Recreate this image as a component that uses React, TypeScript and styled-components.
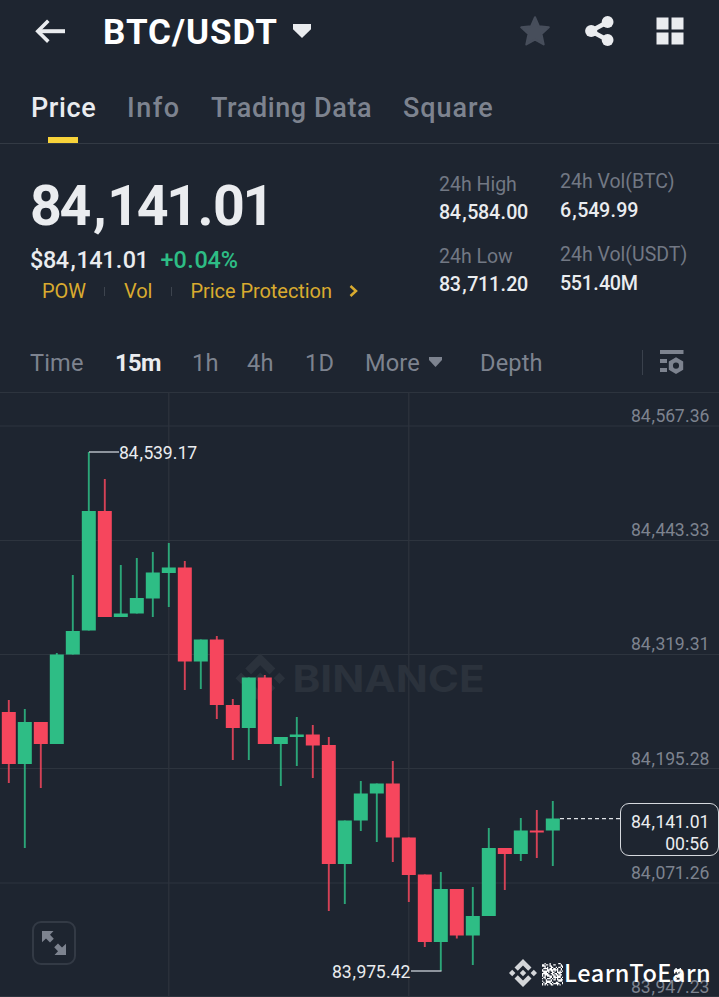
import React from "react";
import styled, { createGlobalStyle } from "styled-components";

const c = {
  bg: "#1e2530",
  line: "#2d343e",
  text: "#eaecef",
  muted: "#7d838f",
  up: "#2ebd85",
  down: "#f6465d",
  gold: "#d9ab2f",
};

const GlobalStyle = createGlobalStyle`
  * { box-sizing: border-box; }
  html, body { margin: 0; background: ${c.bg}; }
  body { font-family: Roboto, "Liberation Sans", sans-serif; color: ${c.text}; overflow: hidden; }
`;

const Screen = styled.main`
  width: 719px;
  height: 997px;
  display: flex;
  flex-direction: column;
  background: ${c.bg};
  overflow: hidden;
`;

/* ---------- figures ---------- */

const FigureText = styled.span<{ $tracking: number }>`
  letter-spacing: ${(p) => p.$tracking}em;
  white-space: nowrap;
`;

const Mark = styled.span<{ $comma: boolean }>`
  padding-left: ${(p) => (p.$comma ? "0.07em" : "0.03em")};
  padding-right: ${(p) => (p.$comma ? "0.05em" : "0.03em")};
`;

function Figure({ value, tracking = -0.016 }: { value: string; tracking?: number }) {
  return (
    <FigureText $tracking={tracking}>
      {value.split(/([,.])/).map((part, i) =>
        part === "," || part === "." ? (
          <Mark key={i} $comma={part === ","}>
            {part}
          </Mark>
        ) : (
          part
        ),
      )}
    </FigureText>
  );
}

/* ---------- header ---------- */

const Header = styled.header`
  height: 64px;
  flex: none;
  display: flex;
  align-items: center;
  padding: 0 35px 2px 34px;
`;

const Pair = styled.h1`
  margin: 4px 0 0 38px;
  font-size: 35px;
  line-height: 40px;
  font-weight: 700;
  letter-spacing: 1px;
  color: #fff;
`;

const HeaderCaret = styled.svg`
  margin: 0 0 0 15px;
`;

const Actions = styled.div`
  margin-left: auto;
  display: flex;
  align-items: center;
`;

const ShareIcon = styled.svg`
  margin: 0 42px 0 35px;
`;

/* ---------- tabs ---------- */

const Tabs = styled.nav`
  height: 80px;
  flex: none;
  display: grid;
  grid-template-columns: 96px 84px 192px auto;
  justify-items: start;
  padding-left: 31px;
  border-bottom: 1px solid #333a44;
`;

const Tab = styled.a<{ $active?: boolean; $tracking?: number }>`
  height: 79px;
  display: flex;
  flex-direction: column;
  align-items: center;
  justify-content: space-between;
  padding-top: 26px;
  font-size: 27px;
  line-height: 36px;
  font-weight: 500;
  letter-spacing: ${(p) => p.$tracking ?? 0.6}px;
  white-space: nowrap;
  color: ${(p) => (p.$active ? c.text : c.muted)};
`;

const TabBar = styled.span`
  width: 30px;
  height: 6px;
  margin-right: 1px;
  background: #f8d33a;
`;

/* ---------- summary ---------- */

const Summary = styled.section`
  height: 190px;
  flex: none;
  display: grid;
  grid-template-columns: 409px 121px 1fr;
  padding-left: 30px;
`;

const PriceColumn = styled.div`
  padding-top: 31px;
`;

const LastPrice = styled.div`
  font-size: 55.5px;
  line-height: 64px;
  font-weight: 700;
`;

const FiatRow = styled.div`
  display: flex;
  gap: 12px;
  margin-top: 7px;
  font-size: 23.4px;
  line-height: 28px;
  font-weight: 500;
`;

const Change = styled.span`
  color: ${c.up};
`;

const Tags = styled.div`
  display: flex;
  align-items: center;
  padding-left: 12px;
  margin-top: 3px;
  font-size: 20px;
  line-height: 28px;
  letter-spacing: -0.05px;
  color: ${c.gold};
`;

const TagDivider = styled.span`
  width: 1px;
  height: 9px;
  margin: 0 18.5px;
  background: #3d444e;
`;

const TagArrow = styled.svg`
  margin-left: 17px;
`;

const StatColumn = styled.dl<{ $top: number; $gap: number }>`
  margin: 0;
  padding-top: ${(p) => p.$top}px;

  dd {
    padding-top: ${(p) => p.$gap}px;
    margin-bottom: ${(p) => 16 - p.$gap + (p.$gap ? 1 : 0)}px;
  }
`;

const StatLabel = styled.dt`
  font-size: 19.5px;
  line-height: 28px;
  color: #727884;
  white-space: nowrap;
`;

const StatValue = styled.dd`
  margin: 0;
  font-size: 19.7px;
  line-height: 28px;
  font-weight: 500;
`;

/* ---------- interval bar ---------- */

const Intervals = styled.nav`
  height: 58px;
  flex: none;
  display: grid;
  grid-template-columns: 85px 77px 55px 58px 60px 115px 162px 1fr;
  align-items: center;
  padding-left: 30px;
  font-size: 23.6px;
  line-height: 28px;
  color: ${c.muted};
`;

const Interval = styled.a<{ $active?: boolean }>`
  display: flex;
  align-items: center;
  gap: 9px;
  letter-spacing: ${(p) => (p.$active ? -0.5 : 0.15)}px;
  font-weight: ${(p) => (p.$active ? 700 : 400)};
  color: ${(p) => (p.$active ? c.text : c.muted)};
`;

const MoreCaret = styled.svg`
  margin-top: -3px;
`;

const Tools = styled.div`
  display: flex;
  align-items: center;
  gap: 17px;
  margin-top: -2px;
`;

const ToolDivider = styled.span`
  width: 1px;
  height: 25px;
  background: #3a414c;
`;

/* ---------- chart ---------- */

const Chart = styled.section`
  position: relative;
  height: 605px;
  flex: none;
  overflow: hidden;
`;

const Plot = styled.svg`
  display: block;
`;

const ChartLabel = styled.div<{ $y: number; $x?: number; $right?: number; $muted?: boolean }>`
  position: absolute;
  top: ${(p) => p.$y - 402}px;
  ${(p) => (p.$x !== undefined ? `left: ${p.$x}px;` : `right: ${p.$right}px;`)}
  font-size: 17.6px;
  line-height: 20px;
  color: ${(p) => (p.$muted ? c.muted : c.text)};
`;

const PriceBox = styled.div`
  position: absolute;
  left: 620px;
  top: 411px;
  width: 99px;
  height: 53px;
  padding: 7px 9px 0 0;
  border: 1px solid #d5d8dd;
  border-radius: 9px;
  background: ${c.bg};
  font-size: 17.6px;
  line-height: 22px;
  text-align: right;
`;

const ExpandButton = styled.button`
  position: absolute;
  left: 32px;
  top: 529px;
  width: 44px;
  height: 44px;
  display: grid;
  place-items: center;
  padding: 0;
  border: 2px solid #333a45;
  border-radius: 9px;
  background: transparent;
`;

const Signature = styled.div`
  position: absolute;
  left: 509px;
  top: 565px;
  height: 32px;
  display: flex;
  align-items: center;
  font: 500 23.5px/32px "Noto Sans CJK SC", "Noto Sans", sans-serif;
  letter-spacing: 0.5px;
  color: #fff;
`;

const SignatureName = styled.span`
  margin-top: -2px;
`;

const Speckle = styled.svg`
  flex: none;
  margin: 2px 1px 0 5px;
`;

const LetterWithSpeckle = styled.span`
  position: relative;
`;

const LetterSpeckle = styled.svg`
  position: absolute;
  left: 2px;
  top: 13px;
`;

// Each candle: direction, high, body top, body bottom, low
type Candle = [boolean, number, number, number, number];
const candles: Candle[] = [
  [false, 700, 712, 764, 783],
  [true, 709, 722, 764, 848],
  [false, 722, 722, 744, 788],
  [true, 653, 654.5, 744, 744],
  [true, 575, 631, 654.5, 654.5],
  [true, 452, 511, 630.5, 630.5],
  [false, 479, 511, 617, 617],
  [true, 565, 613.5, 617, 617],
  [true, 558, 598, 613.5, 613.5],
  [true, 552, 572.5, 598.5, 617],
  [true, 543, 567.5, 573, 607],
  [false, 561, 567.5, 661.5, 690],
  [true, 639.5, 639.5, 661.5, 689],
  [false, 636, 639.5, 705, 719],
  [false, 699, 705, 728, 760],
  [true, 677.5, 677.5, 728, 760],
  [false, 675, 677.5, 744, 744],
  [true, 737, 737, 744, 786],
  [true, 717, 734.5, 737, 766],
  [false, 725, 734.5, 745.5, 778],
  [false, 737, 745, 864, 911],
  [true, 820.5, 820.5, 864, 904],
  [true, 781, 793.5, 820.5, 831],
  [true, 783.5, 783.5, 793.5, 842],
  [false, 761, 783.5, 837.5, 862],
  [false, 837.5, 837.5, 875, 902],
  [false, 874.5, 874.5, 942, 947],
  [true, 872, 889, 942, 971],
  [false, 889, 889, 935.5, 938.5],
  [true, 887, 916, 935.5, 965],
  [true, 828, 848, 916, 916],
  [false, 848, 848, 854, 890],
  [true, 818, 830.5, 854, 861],
  [false, 810, 830.5, 832.5, 858],
  [true, 801, 818.5, 830.5, 866],
];

const axis: [string, number][] = [
  ["84,567.36", 416],
  ["84,443.33", 530],
  ["84,319.31", 644],
  ["84,195.28", 759],
  ["84,071.26", 873],
  ["83,947.23", 987],
];

const gridRows = [392.3, 426, 540.5, 654.5, 768.5, 883, 996.5];
const gridColumns = [168.8, 408.8];

const diamond = (x: number, y: number, r: number) =>
  `M${x} ${y - r}L${x + r} ${y}L${x} ${y + r}L${x - r} ${y}Z`;

// Five-part diamond emblem on a 28-unit square
const emblem = [
  "M14 0L22.5 8.5L19.2 11.8L14 6.6L8.8 11.8L5.5 8.5Z",
  "M14 28L22.5 19.5L19.2 16.2L14 21.4L8.8 16.2L5.5 19.5Z",
  diamond(14, 14, 3.2),
  diamond(3.2, 14, 3.2),
  diamond(24.8, 14, 3.2),
].join("");

// Pseudo-random pixel pattern
function speckle(cols: number, rows: number, size: number, seed: number) {
  let s = seed;
  let d = "";
  for (let y = 0; y < rows; y++) {
    for (let x = 0; x < cols; x++) {
      s = (s * 1103515245 + 12345) % 2147483648;
      if ((s >> 12) % 100 < 58) d += `M${x * size} ${y * size}h${size}v${size}h-${size}z`;
    }
  }
  return d;
}

function Candles() {
  return (
    <>
      {candles.map(([up, high, top, bottom, low], i) => {
        const x = 8.8 + i * 16;
        return (
          <g key={i} fill={up ? c.up : c.down}>
            <rect x={x - 0.95} y={high} width={1.9} height={low - high} opacity={0.85} />
            <rect x={x - 7} y={top} width={14} height={bottom - top} />
          </g>
        );
      })}
    </>
  );
}

export default function App() {
  return (
    <Screen>
      <GlobalStyle />
      <Header>
        <svg width="31" height="26" viewBox="0 0 31 26" fill="none" stroke={c.text}>
          <path d="M31 13.2H4" strokeWidth="4" />
          <path d="M14.3 2.8L3.8 13.2L14.3 23.6" strokeWidth="3.6" />
        </svg>
        <Pair>BTC/USDT</Pair>
        <HeaderCaret width="18" height="14" viewBox="0 0 18 14">
          <path d="M0 0H18V5.3L9 14L0 5.3Z" fill={c.text} />
        </HeaderCaret>
        <Actions>
          <svg width="30" height="30" viewBox="0 0 30 30">
            <path
              d="M15 1.2L19 10.3L28.8 11.3L21.5 17.9L23.7 28.5L15 23.6L6.3 28.5L8.5 17.9L1.2 11.3L11 10.3Z"
              fill="#474e5b"
              stroke="#474e5b"
              strokeWidth="2"
              strokeLinejoin="round"
            />
          </svg>
          <ShareIcon width="29" height="30" viewBox="0 0 29 30" fill={c.text}>
            <path d="M6 15L22.5 6M6 15L22.5 24" stroke={c.text} strokeWidth="4.4" />
            <circle cx="6.2" cy="15" r="6.1" />
            <circle cx="22.6" cy="6" r="5.9" />
            <circle cx="22.6" cy="24" r="5.9" />
          </ShareIcon>
          <svg width="28" height="28" viewBox="0 0 28 28" fill={c.text}>
            <path d="M0.5 0.5h12v12h-12zM15.5 0.5h12v12h-12zM0.5 15.5h12v12h-12zM15.5 15.5h12v12h-12z" />
          </svg>
        </Actions>
      </Header>

      <Tabs>
        <Tab $active>
          Price
          <TabBar />
        </Tab>
        <Tab $tracking={1.5}>Info</Tab>
        <Tab>Trading Data</Tab>
        <Tab $tracking={0.95}>Square</Tab>
      </Tabs>

      <Summary>
        <PriceColumn>
          <LastPrice>
            <Figure value="84,141.01" tracking={-0.041} />
          </LastPrice>
          <FiatRow>
            <Figure value="$84,141.01" />
            <Change>
              <Figure value="+0.04%" tracking={-0.004} />
            </Change>
          </FiatRow>
          <Tags>
            POW
            <TagDivider />
            Vol
            <TagDivider />
            Price Protection
            <TagArrow width="9" height="12" viewBox="0 0 9 12" fill="none">
              <path d="M1.5 1L7 6L1.5 11" stroke={c.gold} strokeWidth="2.5" />
            </TagArrow>
          </Tags>
        </PriceColumn>
        <StatColumn $top={27} $gap={0}>
          <StatLabel>24h High</StatLabel>
          <StatValue>
            <Figure value="84,584.00" />
          </StatValue>
          <StatLabel>24h Low</StatLabel>
          <StatValue>
            <Figure value="83,711.20" />
          </StatValue>
        </StatColumn>
        <StatColumn $top={24} $gap={1}>
          <StatLabel>24h Vol(BTC)</StatLabel>
          <StatValue>
            <Figure value="6,549.99" />
          </StatValue>
          <StatLabel>24h Vol(USDT)</StatLabel>
          <StatValue>
            <Figure value="551.40M" />
          </StatValue>
        </StatColumn>
      </Summary>

      <Intervals>
        <Interval>Time</Interval>
        <Interval $active>15m</Interval>
        <Interval>1h</Interval>
        <Interval>4h</Interval>
        <Interval>1D</Interval>
        <Interval>
          More
          <MoreCaret width="13" height="10" viewBox="0 0 13 10">
            <path d="M0 0H13V3L6.5 10L0 3Z" fill={c.muted} />
          </MoreCaret>
        </Interval>
        <Interval>Depth</Interval>
        <Tools>
          <ToolDivider />
          <svg width="24" height="24" viewBox="0 0 24 24" fill={c.muted}>
            <path d="M0 0h23.5v4H0zM0 9h7v4H0zM0 18h7v4H0z" />
            <path
              fillRule="evenodd"
              d="M16 7.3L23.2 11.5V19.8L16 24L8.8 19.8V11.5ZM16 12.6A3 3 0 1 0 16 18.7A3 3 0 1 0 16 12.6Z"
            />
          </svg>
        </Tools>
      </Intervals>

      <Chart>
        <Plot width="719" height="605" viewBox="0 392 719 605">
          <g stroke={c.line} strokeWidth="1.2">
            {gridRows.map((y) => (
              <line key={y} x1="0" x2="719" y1={y} y2={y} />
            ))}
            {gridColumns.map((x) => (
              <line key={x} x1={x} x2={x} y1="392" y2="997" />
            ))}
          </g>
          <g fill="#2b323c">
            <path d={emblem} transform="translate(235.5 653.5) scale(1.77)" />
            <text
              x="292.5"
              y="692"
              fontFamily="Inter, sans-serif"
              fontWeight="700"
              fontSize="37.5"
              textLength="192"
              lengthAdjust="spacingAndGlyphs"
            >
              BINANCE
            </text>
          </g>
          <Candles />
          <path
            d="M89 452H119M411 971H441.5"
            stroke="#b4b9c1"
            strokeWidth="1.3"
            fill="none"
          />
          <path d="M560 818.7H620" stroke="#e0e3e7" strokeWidth="1.2" strokeDasharray="4 3" />
        </Plot>
        <ChartLabel $y={453} $x={119}>
          <Figure value="84,539.17" />
        </ChartLabel>
        <ChartLabel $y={972} $right={309}>
          <Figure value="83,975.42" />
        </ChartLabel>
        {axis.map(([value, y]) => (
          <ChartLabel key={value} $y={y} $right={10} $muted>
            <Figure value={value} />
          </ChartLabel>
        ))}
        <PriceBox>
          <Figure value="84,141.01" />
          <br />
          00:56
        </PriceBox>
        <ExpandButton aria-label="Expand chart">
          <svg width="26" height="26" viewBox="0 0 26 26" fill={c.muted}>
            <path d="M1 1H12.5L9 4.7L12.8 8.7L9 12.5L5 8.5L1 12.2Z" />
            <path d="M25 25H13.5L17 21.3L13.2 17.3L17 13.5L21 17.5L25 13.8Z" />
          </svg>
        </ExpandButton>
        <Signature>
          <svg width="28" height="28" viewBox="0 0 28 28" fill="#d4d6d9">
            <path d={emblem} />
          </svg>
          <Speckle width="21" height="23" viewBox="0 0 21 23">
            <path d={speckle(17, 18, 1.25, 77)} fill="#fff" />
          </Speckle>
          <SignatureName>
            LearnToE
            <LetterWithSpeckle>
              a
              <LetterSpeckle width="10" height="12" viewBox="0 0 10 12">
                <path d={speckle(6, 8, 1.4, 31)} fill="#fff" />
              </LetterSpeckle>
            </LetterWithSpeckle>
            rn
          </SignatureName>
        </Signature>
      </Chart>
    </Screen>
  );
}
